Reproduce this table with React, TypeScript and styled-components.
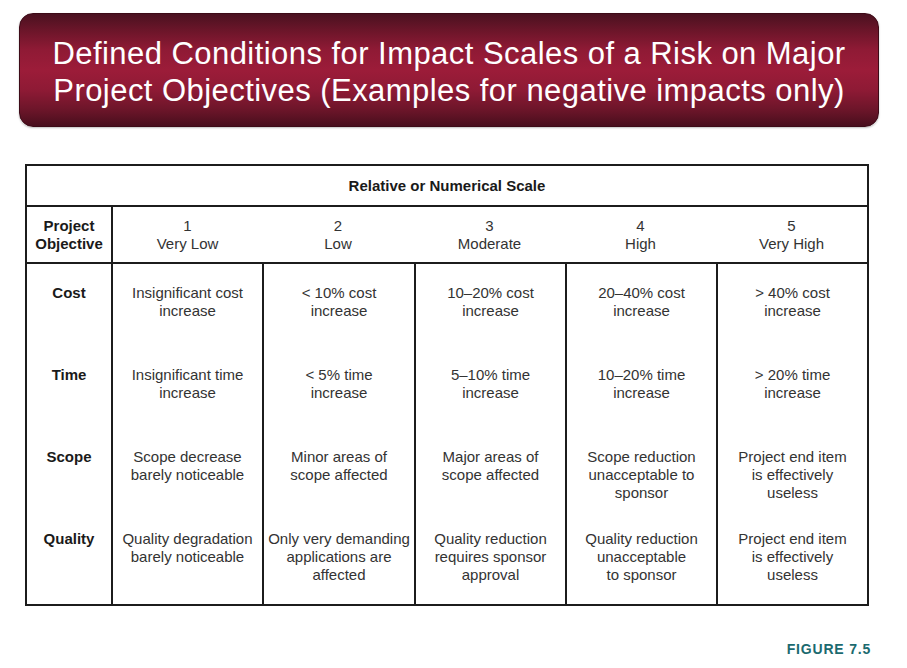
import styled, { createGlobalStyle } from "styled-components";

const GlobalStyle = createGlobalStyle`
  html, body {
    margin: 0;
    padding: 0;
    background: #fff;
  }
  body {
    font-family: "Liberation Sans", Arial, sans-serif;
  }
`;

interface ScaleLevel {
  value: number;
  label: string;
}

interface ObjectiveRow {
  objective: string;
  cells: string[][];
}

const levels: ScaleLevel[] = [
  { value: 1, label: "Very Low" },
  { value: 2, label: "Low" },
  { value: 3, label: "Moderate" },
  { value: 4, label: "High" },
  { value: 5, label: "Very High" },
];

const rows: ObjectiveRow[] = [
  {
    objective: "Cost",
    cells: [
      ["Insignificant cost", "increase"],
      ["< 10% cost", "increase"],
      ["10–20% cost", "increase"],
      ["20–40% cost", "increase"],
      ["> 40% cost", "increase"],
    ],
  },
  {
    objective: "Time",
    cells: [
      ["Insignificant time", "increase"],
      ["< 5% time", "increase"],
      ["5–10% time", "increase"],
      ["10–20% time", "increase"],
      ["> 20% time", "increase"],
    ],
  },
  {
    objective: "Scope",
    cells: [
      ["Scope decrease", "barely noticeable"],
      ["Minor areas of", "scope affected"],
      ["Major areas of", "scope affected"],
      ["Scope reduction", "unacceptable to", "sponsor"],
      ["Project end item", "is effectively", "useless"],
    ],
  },
  {
    objective: "Quality",
    cells: [
      ["Quality degradation", "barely noticeable"],
      ["Only very demanding", "applications are", "affected"],
      ["Quality reduction", "requires sponsor", "approval"],
      ["Quality reduction", "unacceptable", "to sponsor"],
      ["Project end item", "is effectively", "useless"],
    ],
  },
];

export default function App() {
  return (
    <>
      <GlobalStyle />
      <Page>
        <Banner>
          <BannerTitle>
            Defined Conditions for Impact Scales of a Risk on Major
            <br />
            Project Objectives (Examples for negative impacts only)
          </BannerTitle>
        </Banner>

        <ScaleTable>
          <ScaleHeading>Relative or Numerical Scale</ScaleHeading>

          <LevelRow>
            <LabelCell>
              Project
              <br />
              Objective
            </LabelCell>
            {levels.map((level, i) => (
              <LevelCell key={level.value} $divided={i === 0}>
                {level.value}
                <br />
                {level.label}
              </LevelCell>
            ))}
          </LevelRow>

          <Body>
            {rows.map((row, r) => (
              <BodyRow key={row.objective} $last={r === rows.length - 1}>
                <ObjectiveCell>{row.objective}</ObjectiveCell>
                {row.cells.map((lines, c) => (
                  <ImpactCell key={c}>
                    {lines.map((line, l) => (
                      <Line key={l}>{line}</Line>
                    ))}
                  </ImpactCell>
                ))}
              </BodyRow>
            ))}
          </Body>
        </ScaleTable>

        <Caption>FIGURE 7.5</Caption>
      </Page>
    </>
  );
}

const COLUMNS = "84px 151px 152px 151px 151px 151px";

const Page = styled.div`
  width: 907px;
  height: 668px;
  box-sizing: border-box;
  padding: 13px 0 0 19px;
  overflow: hidden;
`;

const Banner = styled.div`
  width: 860px;
  height: 114px;
  box-sizing: border-box;
  padding-top: 3px;
  border-radius: 14px;
  border: 1px solid #3d0a17;
  background: linear-gradient(
    to bottom,
    #4a1120 0%,
    #6a1529 14%,
    #8f1a35 32%,
    #9c1c39 50%,
    #8e1a35 68%,
    #6b1529 86%,
    #480e1d 100%
  );
  box-shadow: 0 1px 2px rgba(0, 0, 0, 0.25);
  display: flex;
  align-items: center;
  justify-content: center;
`;

const BannerTitle = styled.h1`
  margin: 0;
  color: #fff;
  font-family: "Liberation Sans", Arial, sans-serif;
  font-weight: 400;
  font-size: 31px;
  letter-spacing: 0.45px;
  line-height: 37px;
  text-align: center;
  white-space: nowrap;
`;

const ScaleTable = styled.div`
  width: 844px;
  box-sizing: border-box;
  margin: 37px 0 0 6px;
  border: 2px solid #1c1c1c;
  color: #333;
  font-size: 15px;
  line-height: 18px;
`;

const ScaleHeading = styled.div`
  height: 41px;
  box-sizing: border-box;
  border-bottom: 2px solid #1c1c1c;
  display: flex;
  align-items: center;
  justify-content: center;
  font-weight: 700;
  color: #1a1a1a;
`;

const LevelRow = styled.div`
  display: grid;
  grid-template-columns: ${COLUMNS};
  height: 57px;
  box-sizing: border-box;
  border-bottom: 2px solid #1c1c1c;
`;

const LabelCell = styled.div`
  display: flex;
  align-items: center;
  justify-content: center;
  text-align: center;
  font-weight: 700;
  color: #1a1a1a;
`;

const LevelCell = styled.div<{ $divided: boolean }>`
  display: flex;
  align-items: center;
  justify-content: center;
  text-align: center;
  border-left: ${({ $divided }) => ($divided ? "2px solid #1c1c1c" : "none")};
`;

const Body = styled.div`
  display: flex;
  flex-direction: column;
`;

const BodyRow = styled.div<{ $last: boolean }>`
  display: grid;
  grid-template-columns: ${COLUMNS};
  height: ${({ $last }) => ($last ? "94px" : "82px")};
`;

const ObjectiveCell = styled.div`
  padding-top: 20px;
  text-align: center;
  font-weight: 700;
  color: #1a1a1a;
`;

const ImpactCell = styled.div`
  box-sizing: border-box;
  border-left: 2px solid #1c1c1c;
  padding-top: 20px;
  display: flex;
  flex-direction: column;
  align-items: center;
  text-align: center;
  white-space: nowrap;
`;

const Line = styled.span`
  display: block;
`;

const Caption = styled.div`
  width: 852px;
  margin-top: 34px;
  text-align: right;
  color: #1b6a6f;
  font-weight: 700;
  font-size: 14px;
  letter-spacing: 0.8px;
  line-height: 18px;
`;
